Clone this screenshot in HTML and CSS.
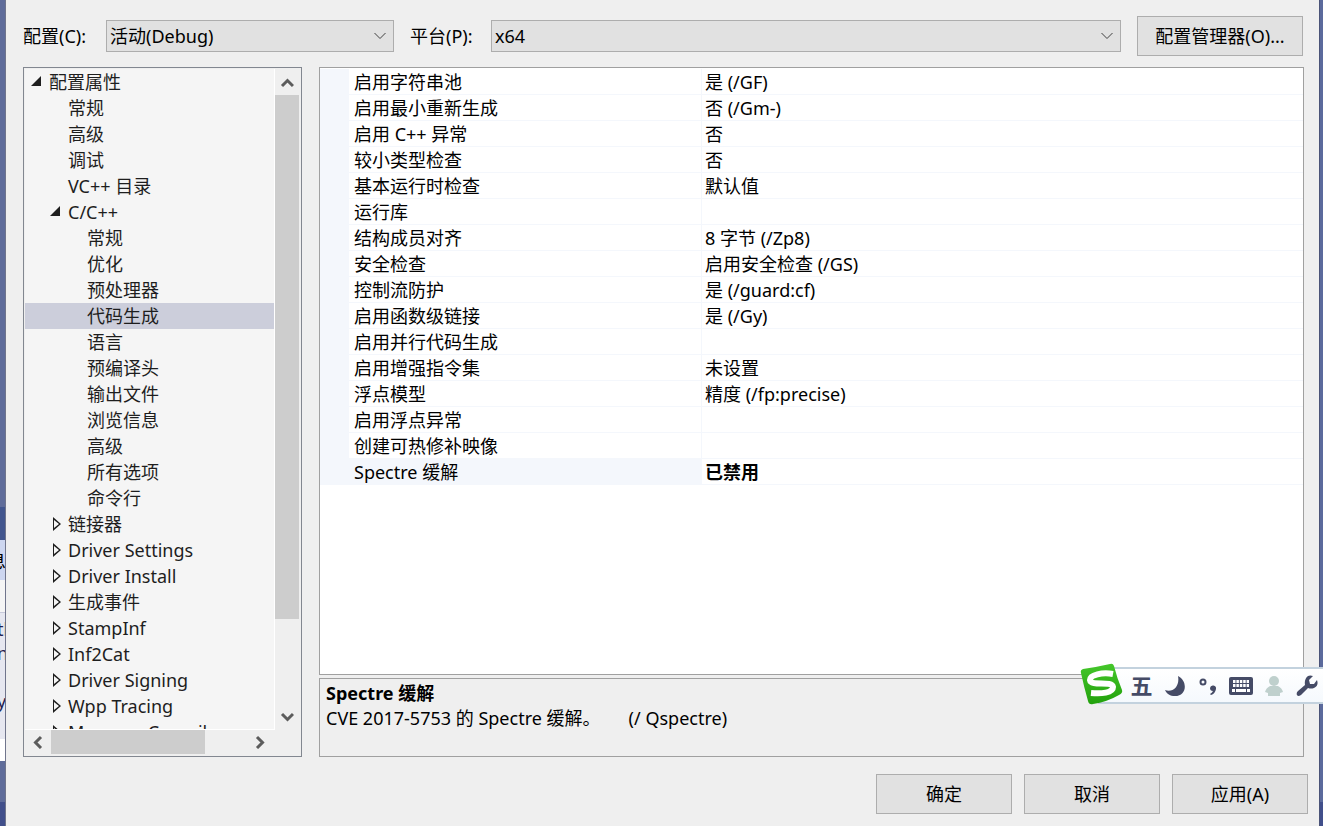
FILE: index.html
```html
<!DOCTYPE html>
<html lang="zh-CN">

<head>
    <meta charset="UTF-8">
    <meta name="viewport" content="width=device-width, initial-scale=1.0">
    <title>属性页</title>
    <link rel="stylesheet" href="styles.css">
</head>

<body>
    <div class="edge-left">
        <div class="edge-top"></div>
        <div class="edge-navy"></div>
        <div class="edge-tab">息</div>
        <div class="edge-bar"></div>
        <div class="edge-text">
            <span>tl</span>
            <span>n</span>
            <span></span>
            <span>y,</span>
        </div>
        <div class="edge-white"></div>
        <div class="edge-mid"></div>
        <div class="edge-bottom"></div>
    </div>

    <main class="dialog">
        <div class="config-row">
            <label class="config-label" for="config">配置(C):</label>
            <div class="select-box config-select">
                <select id="config">
                    <option>活动(Debug)</option>
                </select>
                <svg width="14" height="8" viewBox="0 0 14 8"><path d="M1.500 1L7 6.500L12.500 1" /></svg>
            </div>
            <label class="platform-label" for="platform">平台(P):</label>
            <div class="select-box platform-select">
                <select id="platform">
                    <option>x64</option>
                </select>
                <svg width="14" height="8" viewBox="0 0 14 8"><path d="M1.500 1L7 6.500L12.500 1" /></svg>
            </div>
            <button class="btn manager-btn">配置管理器(O)...</button>
        </div>

        <div class="panels">
            <div class="tree-box">
                <ul class="tree">
                    <li class="open">配置属性</li>
                    <li class="level1">常规</li>
                    <li class="level1">高级</li>
                    <li class="level1">调试</li>
                    <li class="level1">VC++ 目录</li>
                    <li class="level1 open">C/C++</li>
                    <li class="level2">常规</li>
                    <li class="level2">优化</li>
                    <li class="level2">预处理器</li>
                    <li class="level2 selected">代码生成</li>
                    <li class="level2">语言</li>
                    <li class="level2">预编译头</li>
                    <li class="level2">输出文件</li>
                    <li class="level2">浏览信息</li>
                    <li class="level2">高级</li>
                    <li class="level2">所有选项</li>
                    <li class="level2">命令行</li>
                    <li class="level1 closed">链接器</li>
                    <li class="level1 closed">Driver Settings</li>
                    <li class="level1 closed">Driver Install</li>
                    <li class="level1 closed">生成事件</li>
                    <li class="level1 closed">StampInf</li>
                    <li class="level1 closed">Inf2Cat</li>
                    <li class="level1 closed">Driver Signing</li>
                    <li class="level1 closed">Wpp Tracing</li>
                    <li class="level1 closed">Message Compiler</li>
                </ul>
                <div class="scroll-v">
                    <button class="arrow" aria-label="向上"><svg width="14" height="14" viewBox="0 0 14 14"><path d="M2 11L7.500 5.500L13 11" /></svg></button>
                    <div class="track-v"><div class="thumb-v"></div></div>
                    <button class="arrow" aria-label="向下"><svg width="14" height="14" viewBox="0 0 14 14"><path d="M2 4L7.500 9.500L13 4" /></svg></button>
                </div>
                <div class="scroll-h">
                    <button class="arrow" aria-label="向左"><svg width="14" height="14" viewBox="0 0 14 14"><path d="M10 2L4.500 7.500L10 13" /></svg></button>
                    <div class="track-h"><div class="thumb-h"></div></div>
                    <button class="arrow" aria-label="向右"><svg width="14" height="14" viewBox="0 0 14 14"><path d="M2 2L7.500 7.500L2 13" /></svg></button>
                </div>
            </div>

            <div class="right">
                <div class="grid-box">
                    <table class="props">
                        <tr><td class="gutter"></td><th>启用字符串池</th><td>是 (/GF)</td></tr>
                        <tr><td class="gutter"></td><th>启用最小重新生成</th><td>否 (/Gm-)</td></tr>
                        <tr><td class="gutter"></td><th>启用 C++ 异常</th><td>否</td></tr>
                        <tr><td class="gutter"></td><th>较小类型检查</th><td>否</td></tr>
                        <tr><td class="gutter"></td><th>基本运行时检查</th><td>默认值</td></tr>
                        <tr><td class="gutter"></td><th>运行库</th><td></td></tr>
                        <tr><td class="gutter"></td><th>结构成员对齐</th><td>8 字节 (/Zp8)</td></tr>
                        <tr><td class="gutter"></td><th>安全检查</th><td>启用安全检查 (/GS)</td></tr>
                        <tr><td class="gutter"></td><th>控制流防护</th><td>是 (/guard:cf)</td></tr>
                        <tr><td class="gutter"></td><th>启用函数级链接</th><td>是 (/Gy)</td></tr>
                        <tr><td class="gutter"></td><th>启用并行代码生成</th><td></td></tr>
                        <tr><td class="gutter"></td><th>启用增强指令集</th><td>未设置</td></tr>
                        <tr><td class="gutter"></td><th>浮点模型</th><td>精度 (/fp:precise)</td></tr>
                        <tr><td class="gutter"></td><th>启用浮点异常</th><td></td></tr>
                        <tr><td class="gutter"></td><th>创建可热修补映像</th><td></td></tr>
                        <tr class="current"><td class="gutter"></td><th>Spectre 缓解</th><td>已禁用</td></tr>
                    </table>
                </div>
                <div class="desc">
                    <h4>Spectre 缓解</h4>
                    <p>CVE 2017-5753 的 Spectre 缓解。 &nbsp; &nbsp; &nbsp;(/ Qspectre)</p>
                </div>
            </div>
        </div>

        <div class="buttons">
            <button class="btn">确定</button>
            <button class="btn">取消</button>
            <button class="btn">应用(A)</button>
        </div>
    </main>

    <div class="edge-right"></div>

    <!-- input method bar floating over the dialog -->
    <div class="ime">
        <svg class="ime-logo" width="44" height="44" viewBox="0 0 44 44">
            <defs>
                <linearGradient id="green" x1="0" y1="0" x2="0" y2="1">
                    <stop offset="0" stop-color="#45c72b" />
                    <stop offset="1" stop-color="#22a10c" />
                </linearGradient>
            </defs>
            <path d="M3 7Q17 5 30 2Q33 1 34 4Q37 16 42 28Q43 31 39 33Q27 40 13 42Q9 43 8 39Q4 25 1 11Q0 8 3 7Z" fill="url(#green)" />
            <path d="M33 12C22 10 10 13 10 18C11 25 32 18 33 25C33 31 21 32 11 31" fill="none" stroke="#fff" stroke-width="6" />
        </svg>
        <div class="ime-items">
            <span class="ime-mode">五</span>
            <svg width="20" height="20" viewBox="0 0 20 20"><path d="M13 0C23 5 22 20 10 20C5 20 2 18 0 14C8 17 15 10 13 0Z" fill="#454b66" /></svg>
            <svg width="18" height="18" viewBox="0 0 18 18"><circle cx="4" cy="5" r="2.500" fill="none" stroke="#454b66" stroke-width="2" /><path d="M11 11A3 3 0 1 1 17 12Q16 17 12 18L11 17Q13 16 14 14Q11 14 11 11Z" fill="#454b66" /></svg>
            <svg width="24" height="18" viewBox="0 0 24 18">
                <rect width="24" height="18" rx="2" fill="#454b66" />
                <path d="M4 4.500H20M4 8.500H20" stroke="#fff" stroke-width="3" stroke-dasharray="2.500 0.900" />
                <path d="M3 13.500H6M7 13.500H17M18 13.500H21" stroke="#fff" stroke-width="3" />
            </svg>
            <svg width="18" height="20" viewBox="0 0 18 20"><circle cx="9" cy="5" r="5" fill="#bfd0cd" /><path d="M5 10H13Q17 12 18 16L15 17V20H3V17L0 16Q1 12 5 10Z" fill="#bfd0cd" /></svg>
            <svg width="22" height="22" viewBox="0 0 22 22"><path d="M17 1L13 5L14 9L18 9L21 5Q23 11 18 13Q15 14 12 13L5 20Q2 22 1 20Q0 18 2 16L9 10Q8 4 12 1Q14 0 17 1Z" fill="#454b66" /></svg>
        </div>
    </div>
</body>

</html>
```
FILE: styles.css
```css
* {
    box-sizing: border-box;
}

body {
    margin: 0;
    height: 100vh;
    display: flex;
    overflow: hidden;
    background-color: #efefef;
    color: #000;
    font-family: "Noto Sans", "Noto Sans CJK SC", sans-serif;
    font-size: 18px;
    line-height: 26px;
}

button,
select {
    font: inherit;
    color: inherit;
}

/* window behind the dialog */
.edge-left {
    width: 6px;
    flex: none;
    display: flex;
    flex-direction: column;
    overflow: hidden;
    border-right: 1px solid #70758c;
}

.edge-left div {
    flex: none;
    overflow: hidden;
}

.edge-left .edge-top {
    flex: 1;
    background-color: #5f6c9a;
}

.edge-navy {
    height: 33px;
    background-color: #41558e;
}

.edge-tab {
    height: 40px;
    padding-top: 8px;
    background-color: #cdd6f0;
    text-indent: -12px;
}

.edge-bar {
    height: 32px;
    background-color: #f5f5f5;
}

.edge-text {
    height: 127px;
    padding-top: 4px;
    border-top: 1px solid #c8cadb;
    background-color: #e6e7f0;
    color: #1e1e50;
}

.edge-text span {
    display: block;
    height: 24px;
    line-height: 24px;
    text-indent: -3px;
}

.edge-white {
    height: 22px;
    background-color: #fff;
}

.edge-mid {
    height: 41px;
    background-color: #5f6c9a;
}

.edge-bottom {
    height: 24px;
    background-color: #414f8b;
}

.edge-right {
    width: 4px;
    flex: none;
    border-left: 1px solid #4a5378;
    background: linear-gradient(#5b6a9c calc(100% - 24px), #414f8b 0);
}

.dialog {
    flex: 1;
    min-width: 0;
    padding: 16px 11px 12px 17px;
    display: flex;
    flex-direction: column;
}

.config-row {
    display: flex;
    align-items: center;
    padding-right: 5px;
}

.config-label {
    width: 83px;
}

.platform-label {
    width: 81px;
}

.select-box {
    display: grid;
    align-items: center;
    height: 32px;
}

.select-box select,
.select-box svg {
    grid-area: 1 / 1;
}

.select-box select {
    appearance: none;
    width: 100%;
    height: 32px;
    padding: 0 3px;
    border: 1px solid #adadad;
    border-radius: 0;
    background-color: #e1e1e1;
}

.select-box svg {
    justify-self: end;
    margin-right: 7px;
    fill: none;
    stroke: #404040;
    pointer-events: none;
}

.config-select {
    width: 288px;
    margin-right: 16px;
}

.platform-select {
    flex: 1;
    margin-right: 16px;
}

.btn {
    width: 136px;
    height: 40px;
    padding: 0;
    border: 1px solid #adadad;
    background-color: #e1e1e1;
}

.manager-btn {
    width: 166px;
}

.panels {
    flex: 1;
    min-height: 0;
    display: flex;
    gap: 17px;
    margin-top: 11px;
    padding-right: 4px;
}

.tree-box {
    width: 279px;
    flex: none;
    display: grid;
    grid-template-columns: 1fr 24px;
    grid-template-rows: minmax(0, 1fr) 24px;
    padding: 1px 2px 2px 1px;
    border: 1px solid #828790;
}

.tree {
    margin: 0;
    padding: 0;
    overflow: hidden;
    list-style: none;
    background-color: #f5f5f5;
    border-right: 1px solid #fff;
    border-bottom: 1px solid #fff;
    color: #1e1e1e;
}

.tree li {
    height: 26px;
    display: flex;
    align-items: center;
    padding-left: 24px;
    white-space: nowrap;
}

.tree .level1 {
    padding-left: 43px;
}

.tree .level2 {
    padding-left: 62px;
}

.tree .selected {
    background-color: #cccedb;
}

.tree .open::before,
.tree .closed::before {
    content: "";
    flex: none;
    background-color: #1e1e1e;
}

.tree .open::before {
    width: 10px;
    height: 10px;
    margin: 0 8px 2px -18px;
    clip-path: polygon(100% 0, 100% 100%, 0 100%);
}

.tree .closed::before {
    width: 8px;
    height: 14px;
    margin: 0 7px 0 -15px;
    clip-path: polygon(0 0, 100% 50%, 0 100%, 0 0, 1px 3px, 1px 11px, 6px 50%, 1px 3px);
}

.scroll-v {
    display: flex;
    flex-direction: column;
}

.scroll-h {
    grid-column: 1;
    display: flex;
}

.arrow {
    width: 26px;
    height: 26px;
    flex: none;
    display: flex;
    align-items: center;
    justify-content: center;
    padding: 0;
    border: none;
    background: none;
}

.scroll-v .arrow {
    width: 24px;
}

.scroll-h .arrow {
    height: 24px;
}

.arrow svg {
    fill: none;
    stroke: #5c5c5c;
    stroke-width: 3;
}

.track-v,
.track-h {
    flex: 1;
}

.thumb-v {
    height: 86%;
    background-color: #cdcdcd;
}

.thumb-h {
    width: 78%;
    height: 100%;
    background-color: #cdcdcd;
}

.right {
    flex: 1;
    min-width: 0;
    display: flex;
    flex-direction: column;
    gap: 3px;
}

.grid-box {
    flex: 1;
    min-height: 0;
    overflow: hidden;
    padding-top: 1px;
    border: 1px solid #a0a0a0;
    background-color: #fff;
}

.props {
    width: 100%;
    table-layout: fixed;
    border-collapse: separate;
    border-spacing: 0;
}

.props th,
.props td {
    height: 26px;
    padding: 2px 3px 0;
    border-bottom: 1px solid #f4f7fc;
    font-weight: normal;
    line-height: 23px;
    text-align: left;
}

.props th {
    width: 353px;
    padding-left: 5px;
    border-right: 1px solid #f4f7fc;
}

.props .gutter {
    width: 29px;
    background-color: #f4f7fc;
}

.props .current th {
    background-color: #f4f7fc;
}

.props .current td {
    font-weight: bold;
}

.desc {
    height: 79px;
    padding: 2px 6px;
    border: 1px solid #a0a0a0;
}

.desc h4,
.desc p {
    margin: 0;
    font-size: 18px;
    line-height: 25px;
}

.buttons {
    display: flex;
    justify-content: flex-end;
    gap: 12px;
    margin-top: 17px;
}

.ime {
    position: absolute;
    right: 0;
    bottom: 122px;
    width: 225px;
    height: 37px;
    display: flex;
    align-items: center;
    justify-content: space-between;
    border-top: 2px solid #c3d2de;
    border-bottom: 2px solid #c3d2de;
    background: linear-gradient(#fff, #f5f9fd);
}

.ime-logo {
    flex: none;
    margin: 0 0 4px -18px;
}

.ime-items {
    display: grid;
    grid-template-columns: repeat(6, 33px);
    align-items: center;
    justify-items: center;
}

.ime-mode {
    padding-bottom: 2px;
    color: #454b66;
    font-size: 22px;
    font-weight: bold;
}
```
